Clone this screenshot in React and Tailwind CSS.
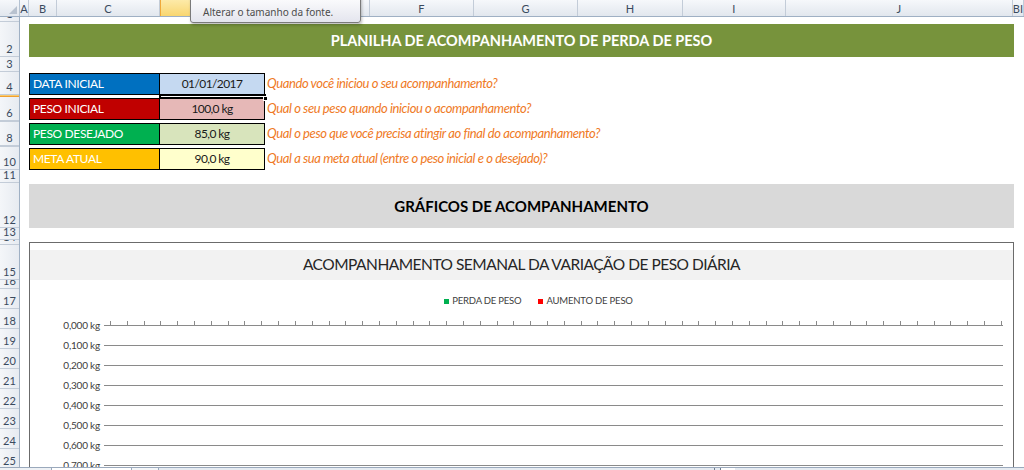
import React from 'react';

const cols = [
  { l: 'A', c: 'w-[9px]' },
  { l: 'B', c: 'w-[28px]' },
  { l: 'C', c: 'w-[103px]' },
  { l: 'D', c: 'w-[105px]', sel: true },
  { l: 'E', c: 'w-[105px]' },
  { l: 'F', c: 'w-[104px]' },
  { l: 'G', c: 'w-[104px]' },
  { l: 'H', c: 'w-[105px]' },
  { l: 'I', c: 'w-[103px]' },
  { l: 'J', c: 'w-[227px]' },
  { l: 'BI', c: 'flex-1' },
];

const rows = [
  { n: '1', c: 'h-[5px]' },
  { n: '2', c: 'h-[35px]' },
  { n: '3', c: 'h-[15px]' },
  { n: '4', c: 'h-[23px]' },
  { n: '5', c: 'h-[2px]', sel: true },
  { n: '6', c: 'h-[24px]' },
  { n: '7', c: 'h-[1px]' },
  { n: '8', c: 'h-[24px]' },
  { n: '9', c: 'h-[1px]' },
  { n: '10', c: 'h-[23px]' },
  { n: '11', c: 'h-[13px]' },
  { n: '12', c: 'h-[45px]' },
  { n: '13', c: 'h-[12px]' },
  { n: '14', c: 'h-[5px]' },
  { n: '15', c: 'h-[35px]' },
  { n: '16', c: 'h-[9px]' },
  { n: '17', c: 'h-[20px]' },
  { n: '18', c: 'h-[20px]' },
  { n: '19', c: 'h-[20px]' },
  { n: '20', c: 'h-[20px]' },
  { n: '21', c: 'h-[20px]' },
  { n: '22', c: 'h-[20px]' },
  { n: '23', c: 'h-[20px]' },
  { n: '24', c: 'h-[20px]' },
  { n: '25', c: 'h-[20px]' },
  { n: '26', c: 'h-[20px]' },
];

const inputs = [
  { label: 'DATA INICIAL', lc: 'bg-[#0070c0]', value: '01/01/2017', vc: 'bg-[#c5d9f1]', q: 'Quando você iniciou o seu acompanhamento?' },
  { label: 'PESO INICIAL', lc: 'bg-[#c00000]', value: '100,0 kg', vc: 'bg-[#e6b8b7]', q: 'Qual o seu peso quando iniciou o acompanhamento?' },
  { label: 'PESO DESEJADO', lc: 'bg-[#00b050]', value: '85,0 kg', vc: 'bg-[#d8e4bc]', q: 'Qual o peso que você precisa atingir ao final do acompanhamento?' },
  { label: 'META ATUAL', lc: 'bg-[#ffc000]', value: '90,0 kg', vc: 'bg-[#ffffcc]', q: 'Qual a sua meta atual (entre o peso inicial e o desejado)?' },
];

const yLabels = ['0,000 kg', '0,100 kg', '0,200 kg', '0,300 kg', '0,400 kg', '0,500 kg', '0,600 kg', '0,700 kg', '0,800 kg'];

function Plot() {
  const ticks = [];
  for (let i = 0; i <= 53; i++) ticks.push(10 + i * 16.81);
  const lines = [];
  for (let k = 0; k < 9; k++) lines.push(10.5 + k * 20);
  return (
    <svg width="904" height="180" className="block shrink-0" shapeRendering="crispEdges">
      {lines.map((y) => (
        <line key={y} x1="4" x2="903" y1={y} y2={y} stroke="#8a8a8a" strokeWidth="1" />
      ))}
      {ticks.map((x) => (
        <line key={x} x1={Math.round(x) + 0.5} x2={Math.round(x) + 0.5} y1="6" y2="10" stroke="#8a8a8a" strokeWidth="1" />
      ))}
    </svg>
  );
}

export default function App() {
  return (
    <div className="relative w-[1024px] h-[470px] overflow-hidden bg-white flex flex-col font-[Lato,'Noto_Sans',sans-serif]">
      {/* column headers */}
      <div className="h-[17px] flex shrink-0 border-b border-[#9fb0c4]">
        <div className="w-[20px] border-r border-[#b4c2d2] bg-gradient-to-b from-[#f6f8fb] to-[#e2e7ee] flex items-end justify-end pr-[2px] pb-[2px]">
          <svg width="8" height="8" className="block">
            <polygon points="8,0 8,8 0,8" fill="#b8c2cf" />
          </svg>
        </div>
        {cols.map((c) => (
          <div
            key={c.l}
            className={
              c.c +
              ' flex items-center justify-center text-[11px] leading-none border-r ' +
              (c.sel
                ? 'bg-gradient-to-b from-[#fdeaa8] to-[#f9d66f] border-[#f0a93a] border-l border-l-[#f0a93a] text-[#3b3b3b]'
                : 'bg-gradient-to-b from-[#f6f8fb] to-[#e2e7ee] border-[#c3ccd8] text-[#3a4a5e]')
            }
          >
            {c.l}
          </div>
        ))}
      </div>

      {/* body */}
      <div className="flex-1 min-h-0 flex overflow-hidden">
        <div className="w-[20px] shrink-0 flex flex-col border-r border-[#9fb0c4]">
          {rows.map((r) => (
            <div
              key={r.n}
              className={
                r.c +
                ' shrink-0 overflow-hidden flex items-end justify-center border-b text-[11px] leading-[12px] ' +
                (r.sel
                  ? 'bg-[#f9c96b] border-[#f0a030]'
                  : 'bg-gradient-to-r from-[#f4f6f9] to-[#e7ebf1] border-[#c3ccd8] text-[#3a4a5e]')
              }
            >
              {r.sel ? null : <span className="pb-[1px]">{r.n}</span>}
            </div>
          ))}
        </div>

        <div className="flex-1 pl-[9px]">
          <div className="w-[985px] flex flex-col">
            <div className="mt-[7px] h-[33px] bg-[#77933c] flex items-center justify-center text-white font-bold text-[14.5px]">
              PLANILHA DE ACOMPANHAMENTO DE PERDA DE PESO
            </div>

            <div className="mt-[16px] flex flex-col gap-[3px]">
              {inputs.map((r) => (
                <div key={r.label} className="h-[22px] flex items-stretch">
                  <div className={r.lc + ' w-[131px] border border-black flex items-center pl-[3px] text-white text-[12px] tracking-[-0.35px]'}>
                    {r.label}
                  </div>
                  <div className={r.vc + ' w-[105px] border border-l-0 border-black flex items-center justify-center text-[12px] tracking-[-0.6px] text-[#1a1a1a]'}>
                    {r.value}
                  </div>
                  <div className="ml-[2px] flex items-center italic text-[13px] tracking-[-0.4px] text-[#ef7a26]">{r.q}</div>
                </div>
              ))}
            </div>

            <div className="mt-[14px] h-[44px] bg-[#d9d9d9] flex items-center justify-center font-bold text-[15px] text-black">
              GRÁFICOS DE ACOMPANHAMENTO
            </div>

            <div className="mt-[14px] border border-[#6b6b6b] flex flex-col h-[260px]">
              <div className="mt-[7px] h-[30px] bg-[#f2f2f2] flex items-center justify-center text-[15.5px] tracking-[-0.5px] text-[#262626]">
                ACOMPANHAMENTO SEMANAL DA VARIAÇÃO DE PESO DIÁRIA
              </div>
              <div className="mt-[13px] h-[16px] flex items-center justify-center pl-[34px] text-[9.5px] tracking-[-0.2px] text-[#404040] gap-[17px]">
                <div className="flex items-center">
                  <span className="w-[5px] h-[5px] bg-[#00b050] mr-[3px]" />
                  PERDA DE PESO
                </div>
                <div className="flex items-center">
                  <span className="w-[5px] h-[5px] bg-[#ff0000] mr-[3px]" />
                  AUMENTO DE PESO
                </div>
              </div>
              <div className="mt-[6px] flex">
                <div className="w-[70px] shrink-0 flex flex-col text-[10px] tracking-[-0.2px] text-[#404040]">
                  {yLabels.map((l) => (
                    <div key={l} className="h-[20px] flex items-center justify-end">
                      {l}
                    </div>
                  ))}
                </div>
                <Plot />
              </div>
            </div>
          </div>
        </div>
      </div>

      {/* sheet tab strip */}
      <div className="h-[3px] shrink-0 flex bg-[#e6ebf1] border-t border-[#9aa9bc]">
        <div className="w-[52px] border-r border-[#9aa9bc] bg-[#eef1f5]" />
        <div className="w-[79px] bg-white" />
        <div className="w-[28px] border-x border-[#9aa9bc] bg-[#f4f6f8]" />
        <div className="w-[555px]" />
        <div className="w-[7px] border-x border-[#6e7c8e]" />
        <div className="w-[14px] bg-white" />
        <div className="flex-1" />
      </div>

      {/* selection of D5 */}
      <div className="absolute left-[159px] top-[94px] w-[107px] h-[5px] border-2 border-black bg-white" />
      <div className="absolute left-[263px] top-[96px] w-[5px] h-[5px] bg-black border border-white" />

      {/* tooltip */}
      <div className="absolute left-[190px] top-[-6px] w-[171px] h-[29px] rounded-b-[3px] border border-[#7a7a7a] bg-gradient-to-b from-white to-[#e4e5ee] shadow-[1px_2px_3px_rgba(0,0,0,0.25)] flex items-end pl-[12px] pb-[2px] text-[10px] text-[#4c4c4c] font-['Noto_Sans',sans-serif]">
        Alterar o tamanho da fonte.
      </div>
    </div>
  );
}
